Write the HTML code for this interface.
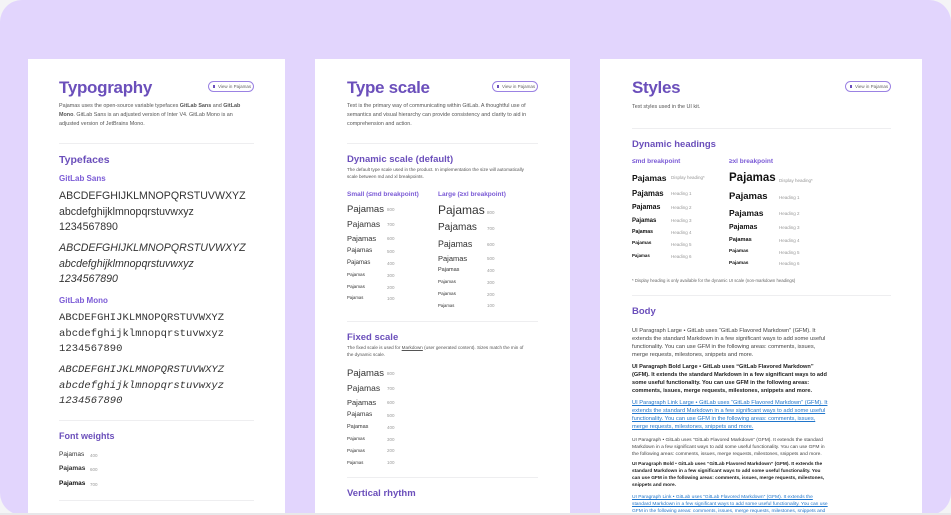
<!DOCTYPE html>
<html><head><meta charset="utf-8"><style>
*{margin:0;padding:0;box-sizing:border-box}
html,body{width:951px;height:515px;overflow:hidden;background:#f4f4f6}
#bg{position:absolute;left:0;top:0;width:951px;height:515px;background:#e2d5fd;border-radius:22px;overflow:hidden}
.p{position:absolute;background:#fff;top:59px;height:456px}
.t{position:absolute;white-space:nowrap;font-family:"Liberation Sans",sans-serif;color:#333;line-height:1}
.h1{font-size:17px;font-weight:bold;color:#6b4fbb;letter-spacing:-0.3px}
.h2{font-size:10.5px;font-weight:bold;color:#6b4fbb}
.h3{font-size:8px;font-weight:bold;color:#7b5bd6}
.s{font-size:5.4px;color:#555;line-height:9px}
.n{font-size:4.5px;color:#999}
.hr{position:absolute;height:1px;background:#eeeef0}
.btn{position:absolute;height:11px;width:46px;border:1px solid #9b82e3;border-radius:6px;font-family:"Liberation Sans",sans-serif;font-size:4.5px;color:#666;line-height:9px;padding-left:9px}
.btn:before{content:"";position:absolute;left:4px;top:3px;width:2px;height:3px;background:#6b4fbb}
.sans{font-size:10.6px;color:#333}
.mono{font-family:"Liberation Mono",monospace;font-size:10.5px;color:#333;letter-spacing:0.05px}
.body{position:absolute;font-family:"Liberation Sans",sans-serif;white-space:normal;color:#444}
a{color:#1f75cb}
#bot{position:absolute;left:0;top:513px;width:951px;height:2px;background:#e8e8ea}
</style></head><body><div id="bg">
<div class="p" style="left:28px;width:257px"></div>
<div class="p" style="left:315px;width:255px"></div>
<div class="p" style="left:600px;width:322px"></div>

<!-- Panel 1 -->
<div class="t h1" style="left:59px;top:79px">Typography</div>
<div class="btn" style="left:208px;top:81px">View in Pajamas</div>
<div class="t s" style="left:59px;top:102px">Pajamas uses the open-source variable typefaces <b>GitLab Sans</b> and <b>GitLab</b><br><b>Mono</b>. GitLab Sans is an adjusted version of Inter V4. GitLab Mono is an<br>adjusted version of JetBrains Mono.</div>
<div class="hr" style="left:59px;top:143px;width:195px"></div>
<div class="t h2" style="left:59px;top:155px">Typefaces</div>
<div class="t h3" style="left:59px;top:175px">GitLab Sans</div>
<div class="t sans" style="left:59px;top:189px;line-height:15.5px">ABCDEFGHIJKLMNOPQRSTUVWXYZ<br>abcdefghijklmnopqrstuvwxyz<br>1234567890</div>
<div class="t sans" style="left:59px;top:241px;line-height:15.5px;font-style:italic">ABCDEFGHIJKLMNOPQRSTUVWXYZ<br>abcdefghijklmnopqrstuvwxyz<br>1234567890</div>
<div class="t h3" style="left:59px;top:297px">GitLab Mono</div>
<div class="t mono" style="left:59px;top:311px;line-height:15.7px">ABCDEFGHIJKLMNOPQRSTUVWXYZ<br>abcdefghijklmnopqrstuvwxyz<br>1234567890</div>
<div class="t mono" style="left:59px;top:363px;line-height:15.7px;font-style:italic">ABCDEFGHIJKLMNOPQRSTUVWXYZ<br>abcdefghijklmnopqrstuvwxyz<br>1234567890</div>
<div class="hr" style="left:59px;top:420px;width:195px"></div>
<div class="t h2" style="left:59px;top:432px;font-size:9px">Font weights</div>
<div class="t" style="left:59px;top:452px;font-size:6.5px">Pajamas</div><div class="t n" style="left:90px;top:454px">400</div>
<div class="t" style="left:59px;top:466px;font-size:6.5px;font-weight:bold">Pajamas</div><div class="t n" style="left:90px;top:468px">600</div>
<div class="t" style="left:59px;top:481px;font-size:6.5px;font-weight:bold;color:#111">Pajamas</div><div class="t n" style="left:90px;top:483px">700</div>
<div class="hr" style="left:59px;top:500px;width:195px"></div>

<!-- Panel 2 -->
<div class="t h1" style="left:347px;top:79px">Type scale</div>
<div class="btn" style="left:492px;top:81px">View in Pajamas</div>
<div class="t s" style="left:347px;top:102px">Text is the primary way of communicating within GitLab. A thoughtful use of<br>semantics and visual hierarchy can provide consistency and clarity to aid in<br>comprehension and action.</div>
<div class="hr" style="left:347px;top:143px;width:191px"></div>
<div class="t h2" style="left:347px;top:155px;font-size:9.5px">Dynamic scale (default)</div>
<div class="t s" style="left:347px;top:166px;font-size:4.6px;line-height:7px">The default type scale used in the product. In implementation the size will automatically<br>scale between md and xl breakpoints.</div>
<div class="t h3" style="left:347px;top:192px;font-size:6.5px">Small (≤md breakpoint)</div>
<div class="t h3" style="left:438px;top:192px;font-size:6.5px">Large (≥xl breakpoint)</div>

<div class="t" style="left:347px;top:205px;font-size:9.5px">Pajamas</div><div class="t n" style="left:387px;top:208px">800</div>
<div class="t" style="left:347px;top:220px;font-size:8.5px">Pajamas</div><div class="t n" style="left:387px;top:223px">700</div>
<div class="t" style="left:347px;top:235px;font-size:7.5px">Pajamas</div><div class="t n" style="left:387px;top:237px">600</div>
<div class="t" style="left:347px;top:248px;font-size:6.5px">Pajamas</div><div class="t n" style="left:387px;top:250px">500</div>
<div class="t" style="left:347px;top:260px;font-size:6px">Pajamas</div><div class="t n" style="left:387px;top:262px">400</div>
<div class="t" style="left:347px;top:273px;font-size:4.6px">Pajamas</div><div class="t n" style="left:387px;top:274px">300</div>
<div class="t" style="left:347px;top:285px;font-size:4.6px">Pajamas</div><div class="t n" style="left:387px;top:286px">200</div>
<div class="t" style="left:347px;top:296px;font-size:4.2px">Pajamas</div><div class="t n" style="left:387px;top:297px">100</div>

<div class="t" style="left:438px;top:204px;font-size:12px">Pajamas</div><div class="t n" style="left:487px;top:211px">800</div>
<div class="t" style="left:438px;top:223px;font-size:10px">Pajamas</div><div class="t n" style="left:487px;top:227px">700</div>
<div class="t" style="left:438px;top:240px;font-size:8.8px">Pajamas</div><div class="t n" style="left:487px;top:243px">600</div>
<div class="t" style="left:438px;top:255px;font-size:7.5px">Pajamas</div><div class="t n" style="left:487px;top:257px">500</div>
<div class="t" style="left:438px;top:268px;font-size:5.5px">Pajamas</div><div class="t n" style="left:487px;top:269px">400</div>
<div class="t" style="left:438px;top:280px;font-size:4.6px">Pajamas</div><div class="t n" style="left:487px;top:281px">300</div>
<div class="t" style="left:438px;top:292px;font-size:4.6px">Pajamas</div><div class="t n" style="left:487px;top:293px">200</div>
<div class="t" style="left:438px;top:304px;font-size:4.2px">Pajamas</div><div class="t n" style="left:487px;top:304px">100</div>

<div class="hr" style="left:347px;top:321px;width:191px"></div>
<div class="t h2" style="left:347px;top:333px;font-size:9.5px">Fixed scale</div>
<div class="t s" style="left:347px;top:344px;font-size:4.6px;line-height:7px">The fixed scale is used for <u>Markdown</u> (user generated content). Sizes match the min of<br>the dynamic scale.</div>
<div class="t" style="left:347px;top:369px;font-size:9.5px">Pajamas</div><div class="t n" style="left:387px;top:372px">800</div>
<div class="t" style="left:347px;top:384px;font-size:8.5px">Pajamas</div><div class="t n" style="left:387px;top:387px">700</div>
<div class="t" style="left:347px;top:399px;font-size:7.5px">Pajamas</div><div class="t n" style="left:387px;top:401px">600</div>
<div class="t" style="left:347px;top:412px;font-size:6.5px">Pajamas</div><div class="t n" style="left:387px;top:414px">500</div>
<div class="t" style="left:347px;top:425px;font-size:5.5px">Pajamas</div><div class="t n" style="left:387px;top:426px">400</div>
<div class="t" style="left:347px;top:437px;font-size:4.6px">Pajamas</div><div class="t n" style="left:387px;top:438px">300</div>
<div class="t" style="left:347px;top:449px;font-size:4.6px">Pajamas</div><div class="t n" style="left:387px;top:449px">200</div>
<div class="t" style="left:347px;top:461px;font-size:4.2px">Pajamas</div><div class="t n" style="left:387px;top:461px">100</div>
<div class="hr" style="left:347px;top:477px;width:191px"></div>
<div class="t h2" style="left:347px;top:489px;font-size:9.5px">Vertical rhythm</div>

<!-- Panel 3 -->
<div class="t h1" style="left:632px;top:79px">Styles</div>
<div class="btn" style="left:845px;top:81px">View in Pajamas</div>
<div class="t s" style="left:632px;top:103px">Text styles used in the UI kit.</div>
<div class="hr" style="left:632px;top:128px;width:259px"></div>
<div class="t h2" style="left:632px;top:140px;font-size:9.5px">Dynamic headings</div>
<div class="t h3" style="left:632px;top:159px;font-size:6.5px">≤md breakpoint</div>
<div class="t h3" style="left:729px;top:159px;font-size:6.5px">≥xl breakpoint</div>

<div class="t" style="left:632px;top:174px;font-size:8.5px;font-weight:bold;color:#111">Pajamas</div><div class="t n" style="left:671px;top:176px">Display heading*</div>
<div class="t" style="left:632px;top:190px;font-size:7.8px;font-weight:bold;color:#111">Pajamas</div><div class="t n" style="left:671px;top:192px">Heading 1</div>
<div class="t" style="left:632px;top:204px;font-size:7px;font-weight:bold;color:#111">Pajamas</div><div class="t n" style="left:671px;top:206px">Heading 2</div>
<div class="t" style="left:632px;top:218px;font-size:6px;font-weight:bold;color:#111">Pajamas</div><div class="t n" style="left:671px;top:219px">Heading 3</div>
<div class="t" style="left:632px;top:230px;font-size:5.2px;font-weight:bold;color:#111">Pajamas</div><div class="t n" style="left:671px;top:231px">Heading 4</div>
<div class="t" style="left:632px;top:242px;font-size:4.8px;font-weight:bold;color:#111">Pajamas</div><div class="t n" style="left:671px;top:243px">Heading 5</div>
<div class="t" style="left:632px;top:254px;font-size:4.4px;font-weight:bold;color:#111">Pajamas</div><div class="t n" style="left:671px;top:255px">Heading 6</div>

<div class="t" style="left:729px;top:173px;font-size:11.5px;font-weight:bold;color:#111">Pajamas</div><div class="t n" style="left:779px;top:179px">Display heading*</div>
<div class="t" style="left:729px;top:192px;font-size:9.5px;font-weight:bold;color:#111">Pajamas</div><div class="t n" style="left:779px;top:196px">Heading 1</div>
<div class="t" style="left:729px;top:209px;font-size:8.5px;font-weight:bold;color:#111">Pajamas</div><div class="t n" style="left:779px;top:212px">Heading 2</div>
<div class="t" style="left:729px;top:224px;font-size:7px;font-weight:bold;color:#111">Pajamas</div><div class="t n" style="left:779px;top:226px">Heading 3</div>
<div class="t" style="left:729px;top:238px;font-size:5.6px;font-weight:bold;color:#111">Pajamas</div><div class="t n" style="left:779px;top:239px">Heading 4</div>
<div class="t" style="left:729px;top:250px;font-size:4.8px;font-weight:bold;color:#111">Pajamas</div><div class="t n" style="left:779px;top:251px">Heading 5</div>
<div class="t" style="left:729px;top:262px;font-size:4.8px;font-weight:bold;color:#111">Pajamas</div><div class="t n" style="left:779px;top:262px">Heading 6</div>
<div class="t" style="left:632px;top:279px;font-size:4.3px;color:#666">* Display heading is only available for the dynamic UI scale (non-markdown headings)</div>
<div class="hr" style="left:632px;top:295px;width:259px"></div>
<div class="t h2" style="left:632px;top:307px;font-size:9.5px">Body</div>

<div class="body" style="left:632px;top:327px;width:196px;font-size:5.7px;line-height:8px">UI Paragraph Large • GitLab uses “GitLab Flavored Markdown” (GFM). It extends the standard Markdown in a few significant ways to add some useful functionality. You can use GFM in the following areas: comments, issues, merge requests, milestones, snippets and more.</div>
<div class="body" style="left:632px;top:363px;width:196px;font-size:5.6px;line-height:8px;font-weight:bold;color:#222">UI Paragraph Bold Large • GitLab uses “GitLab Flavored Markdown” (GFM). It extends the standard Markdown in a few significant ways to add some useful functionality. You can use GFM in the following areas: comments, issues, merge requests, milestones, snippets and more.</div>
<div class="body" style="left:632px;top:399px;width:196px;font-size:5.7px;line-height:8px"><a><u>UI Paragraph Link Large • GitLab uses “GitLab Flavored Markdown” (GFM). It extends the standard Markdown in a few significant ways to add some useful functionality. You can use GFM in the following areas: comments, issues, merge requests, milestones, snippets and more.</u></a></div>
<div class="body" style="left:632px;top:437px;width:196px;font-size:4.9px;line-height:7px">UI Paragraph • GitLab uses “GitLab Flavored Markdown” (GFM). It extends the standard Markdown in a few significant ways to add some useful functionality. You can use GFM in the following areas: comments, issues, merge requests, milestones, snippets and more.</div>
<div class="body" style="left:632px;top:461px;width:196px;font-size:4.8px;line-height:7px;font-weight:bold;color:#222">UI Paragraph Bold • GitLab uses “GitLab Flavored Markdown” (GFM). It extends the standard Markdown in a few significant ways to add some useful functionality. You can use GFM in the following areas: comments, issues, merge requests, milestones, snippets and more.</div>
<div class="body" style="left:632px;top:494px;width:196px;font-size:4.9px;line-height:7px"><a><u>UI Paragraph Link • GitLab uses “GitLab Flavored Markdown” (GFM). It extends the standard Markdown in a few significant ways to add some useful functionality. You can use GFM in the following areas: comments, issues, merge requests, milestones, snippets and more.</u></a></div>
</div>
<div id="bot"></div>
</body></html>
